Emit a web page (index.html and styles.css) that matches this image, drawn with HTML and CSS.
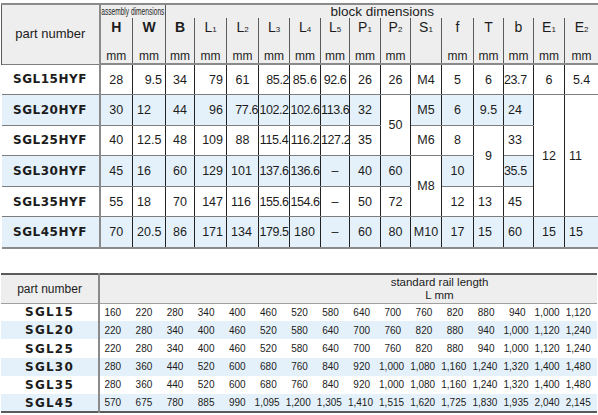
FILE: index.html
```html
<!DOCTYPE html>
<html>
<head>
<meta charset="utf-8">
<link rel="stylesheet" href="styles.css">
</head>
<body>
<table class="spec">
  <colgroup>
    <col style="width:98px"><col style="width:33px"><col style="width:33px"><col style="width:29px">
    <col style="width:32px"><col style="width:32px"><col style="width:31px"><col style="width:31px">
    <col style="width:29px"><col style="width:31px"><col style="width:30px"><col style="width:31px">
    <col style="width:32px"><col style="width:30px"><col style="width:30px"><col style="width:31px">
    <col style="width:34px">
  </colgroup>
  <thead>
    <tr class="h1">
      <th rowspan="3" class="pnh">part number</th>
      <th colspan="2" class="asm"><div class="squeeze"><span>assembly dimensions</span></div></th>
      <th colspan="14" class="blk">block dimensions</th>
    </tr>
    <tr class="h2">
      <th class="bold">H</th><th class="bold">W</th><th class="bold">B</th>
      <th>L<small>1</small></th><th>L<small>2</small></th><th>L<small>3</small></th><th>L<small>4</small></th><th>L<small>5</small></th>
      <th>P<small>1</small></th><th>P<small>2</small></th><th>S<small>1</small></th>
      <th>f</th><th>T</th><th>b</th><th>E<small>1</small></th><th>E<small>2</small></th>
    </tr>
    <tr class="h3">
      <th>mm</th><th>mm</th><th>mm</th><th>mm</th><th>mm</th><th>mm</th><th>mm</th><th>mm</th>
      <th>mm</th><th>mm</th><th></th><th>mm</th><th>mm</th><th>mm</th><th>mm</th><th>mm</th>
    </tr>
  </thead>
  <tbody>
    <tr>
      <th class="pn">SGL15HYF</th>
      <td class="c">28</td><td class="r">9.5</td><td class="c">34</td><td class="r">79</td><td class="c">61</td>
      <td class="r n">85.2</td><td class="r">85.6</td><td class="c n">92.6</td><td class="c">26</td><td class="c">26</td>
      <td class="c">M4</td><td class="c">5</td><td class="c">6</td><td class="l n">23.7</td><td class="c">6</td><td class="c">5.4</td>
    </tr>
    <tr class="blue">
      <th class="pn">SGL20HYF</th>
      <td class="c">30</td><td class="l">12</td><td class="c">44</td><td class="r">96</td><td class="r n">77.6</td>
      <td class="c n">102.2</td><td class="c n">102.6</td><td class="c n">113.6</td><td class="c">32</td>
      <td rowspan="2" class="c w">50</td>
      <td class="c">M5</td><td class="c">6</td><td class="c">9.5</td><td class="l">24</td>
      <td rowspan="4" class="c w">12</td><td rowspan="4" class="l w">11</td>
    </tr>
    <tr>
      <th class="pn">SGL25HYF</th>
      <td class="c">40</td><td class="l">12.5</td><td class="c">48</td><td class="r">109</td><td class="c">88</td>
      <td class="c n">115.4</td><td class="c n">116.2</td><td class="c n">127.2</td><td class="c">35</td>
      <td class="c">M6</td><td class="c">8</td>
      <td rowspan="2" class="c w">9</td>
      <td class="l">33</td>
    </tr>
    <tr class="blue">
      <th class="pn">SGL30HYF</th>
      <td class="c">45</td><td class="l">16</td><td class="c">60</td><td class="r">129</td><td class="l">101</td>
      <td class="c n">137.6</td><td class="c n">136.6</td><td class="c dash">–</td><td class="c">40</td><td class="c">60</td>
      <td rowspan="2" class="c w">M8</td>
      <td class="c">10</td><td class="l n">35.5</td>
    </tr>
    <tr>
      <th class="pn">SGL35HYF</th>
      <td class="c">55</td><td class="l">18</td><td class="c">70</td><td class="r">147</td><td class="l">116</td>
      <td class="c n">155.6</td><td class="c n">154.6</td><td class="c dash">–</td><td class="c">50</td><td class="c">72</td>
      <td class="c">12</td><td class="l">13</td><td class="l">45</td>
    </tr>
    <tr class="blue">
      <th class="pn">SGL45HYF</th>
      <td class="c">70</td><td class="l">20.5</td><td class="c">86</td><td class="r">171</td><td class="l">134</td>
      <td class="c n">179.5</td><td class="l">180</td><td class="c dash">–</td><td class="c">60</td><td class="c">80</td>
      <td class="c">M10</td><td class="c">17</td><td class="l">15</td><td class="l">60</td><td class="c">15</td><td class="l">15</td>
    </tr>
  </tbody>
</table>

<table class="rail">
  <colgroup>
    <col style="width:98px">
    <col style="width:31.1px"><col style="width:31.1px"><col style="width:31.1px"><col style="width:31.1px">
    <col style="width:31.1px"><col style="width:31.1px"><col style="width:31.1px"><col style="width:31.1px">
    <col style="width:31.1px"><col style="width:31.1px"><col style="width:31.1px"><col style="width:31.1px">
    <col style="width:31.1px"><col style="width:31.1px"><col style="width:31.1px"><col style="width:31.1px">
  </colgroup>
  <thead>
    <tr>
      <th class="pnh">part number</th>
      <th colspan="16" class="std"><span class="ln">standard rail length</span><span class="ln">L mm</span></th>
    </tr>
  </thead>
  <tbody>
    <tr><th class="pn">SGL15</th><td>160</td><td>220</td><td>280</td><td>340</td><td>400</td><td>460</td><td>520</td><td>580</td><td>640</td><td>700</td><td>760</td><td>820</td><td>880</td><td>940</td><td>1,000</td><td>1,120</td></tr>
    <tr class="blue"><th class="pn">SGL20</th><td>220</td><td>280</td><td>340</td><td>400</td><td>460</td><td>520</td><td>580</td><td>640</td><td>700</td><td>760</td><td>820</td><td>880</td><td>940</td><td>1,000</td><td>1,120</td><td>1,240</td></tr>
    <tr><th class="pn">SGL25</th><td>220</td><td>280</td><td>340</td><td>400</td><td>460</td><td>520</td><td>580</td><td>640</td><td>700</td><td>760</td><td>820</td><td>880</td><td>940</td><td>1,000</td><td>1,120</td><td>1,240</td></tr>
    <tr class="blue"><th class="pn">SGL30</th><td>280</td><td>360</td><td>440</td><td>520</td><td>600</td><td>680</td><td>760</td><td>840</td><td>920</td><td>1,000</td><td>1,080</td><td>1,160</td><td>1,240</td><td>1,320</td><td>1,400</td><td>1,480</td></tr>
    <tr><th class="pn">SGL35</th><td>280</td><td>360</td><td>440</td><td>520</td><td>600</td><td>680</td><td>760</td><td>840</td><td>920</td><td>1,000</td><td>1,080</td><td>1,160</td><td>1,240</td><td>1,320</td><td>1,400</td><td>1,480</td></tr>
    <tr class="blue"><th class="pn">SGL45</th><td>570</td><td>675</td><td>780</td><td>885</td><td>990</td><td>1,095</td><td>1,200</td><td>1,305</td><td>1,410</td><td>1,515</td><td>1,620</td><td>1,725</td><td>1,830</td><td>1,935</td><td>2,040</td><td>2,145</td></tr>
  </tbody>
</table>
</body>
</html>
```

FILE: styles.css
```css
body {
  margin: 0;
  padding: 3px 1px 0 1px;
  background: #ffffff;
  color: #1c1c1c;
  font-family: "Liberation Sans", Arial, sans-serif;
}

table {
  border-collapse: collapse;
  table-layout: fixed;
  width: 596px;
}

th, td {
  padding: 0;
  white-space: nowrap;
  overflow: visible;
}

/* ---------- top table ---------- */
.spec {
  border-top: 2px solid #8a8a8a;
  border-bottom: 2px solid #8a8a8a;
}

.spec thead th {
  background: #eeeeee;
  font-weight: normal;
  border-left: 1px solid #5a5a5a;
  border-right: 1px solid #5a5a5a;
  text-align: center;
  vertical-align: middle;
}

.spec thead tr.h3 th {
  border-bottom: 2px solid #8a8a8a;
  font-size: 12px;
  height: 20px;
  vertical-align: bottom;
  padding-bottom: 0;
}

.spec .h1 th {
  height: 13px;
  font-size: 13px;
  line-height: 13px;
}

.spec .h2 th {
  height: 24px;
  font-size: 14px;
  vertical-align: top;
  padding-top: 1px;
}

.spec .h2 th.bold {
  font-weight: bold;
}

.spec .h2 small {
  font-size: 8px;
}

.spec th.pnh {
  font-size: 13px;
  border-right: 2px solid #8a8a8a;
  vertical-align: middle;
  padding-bottom: 2px;
}

.spec th.blk {
  border-right: none;
  font-size: 13.5px;
  vertical-align: top;
}

.squeeze {
  display: flex;
  justify-content: center;
  overflow: visible;
}

.squeeze span {
  display: inline-block;
  font-size: 10px;
  line-height: 12px;
  transform: scaleX(0.66);
  white-space: nowrap;
}

.spec tbody tr {
  height: 30.6px;
}

.spec tbody td {
  font-size: 12.5px;
  border: 1px solid #222222;
  border-top: 1px solid #7d7d7d;
  border-bottom: 1px solid #7d7d7d;
  background: #ffffff;
}

.spec tbody tr.blue td,
.spec tbody tr.blue th {
  background: #e5f1fa;
}

.spec tbody tr td.w {
  background: #ffffff;
}

.spec tbody th.pn {
  font-family: "DejaVu Sans", Verdana, sans-serif;
  font-weight: bold;
  font-size: 12px;
  letter-spacing: 0.5px;
  text-align: center;
  border-right: 2px solid #8a8a8a;
  border-top: 1px solid #7d7d7d;
  border-bottom: 1px solid #7d7d7d;
  background: #ffffff;
}

.c { text-align: center; }
.l { text-align: left; padding-left: 4px; }
.r { text-align: right; padding-right: 3px; }
.n { letter-spacing: -0.4px; }
.spec tbody td.n.c, .spec tbody td.n.l, .spec tbody td.n.r { padding-left: 0; padding-right: 0; }
.dash { font-size: 13px; }

/* ---------- bottom table ---------- */
.rail {
  margin-top: 24px;
  border-top: 2px solid #5a5a5a;
  border-bottom: 2px solid #5a5a5a;
}

.rail thead th {
  background: #eeeeee;
  font-weight: normal;
  font-size: 12px;
  height: 27px;
  border-bottom: 1px solid #a0a0a0;
}

.rail th.pnh {
  border-right: 2px solid #8a8a8a;
  text-align: center;
  padding-top: 1px;
}

.rail th.std {
  text-align: center;
  padding-left: 182px;
  vertical-align: middle;
  font-size: 11.5px;
}

.rail th.std .ln {
  display: block;
  line-height: 13px;
}

.rail tbody tr {
  height: 18.2px;
}

.rail tbody tr.blue td,
.rail tbody tr.blue th {
  background: #e5f1fa;
}

.rail tbody th.pn {
  font-family: "DejaVu Sans", Verdana, sans-serif;
  font-weight: bold;
  font-size: 12px;
  letter-spacing: 1.2px;
  text-align: center;
  border-right: 2px solid #8a8a8a;
}

.rail tbody td {
  font-size: 10px;
  text-align: right;
  padding-right: 9px;
}
```
